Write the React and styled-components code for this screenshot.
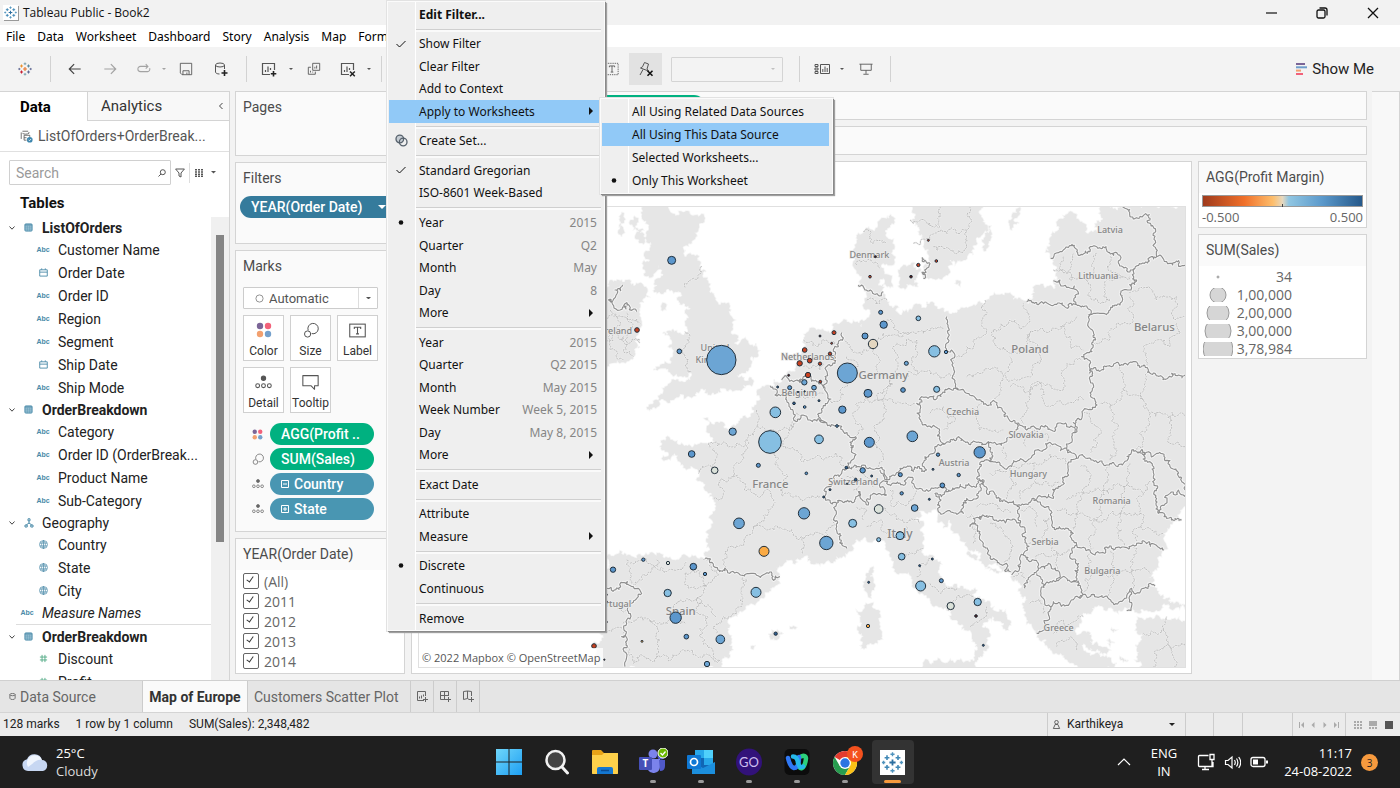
import React, { useState } from 'react';
import styled, { createGlobalStyle } from 'styled-components';

const GlobalStyle = createGlobalStyle`
	* {
		box-sizing: border-box;
	}

	body {
		margin: 0;
		font-family: Roboto, 'Liberation Sans', sans-serif;
		font-size: 14px;
		color: #333333;
	}

	button,
	input,
	select {
		font: inherit;
		color: inherit;
		margin: 0;
		padding: 0;
		border: 0;
		background: none;
	}

	ul {
		list-style: none;
		margin: 0;
		padding: 0;
	}

	a {
		color: inherit;
		text-decoration: none;
	}

	svg {
		display: block;
		flex: none;
	}
`;

const systemFont = "'Open Sans', 'Noto Sans', sans-serif";
const menuFont = "'Noto Sans', 'Open Sans', sans-serif";

const App = styled.div`
	display: flex;
	flex-direction: column;
	height: 100vh;
	overflow: hidden;
	background-color: #f3f3f3;
`;

/* ---------- window frame ---------- */

const TitleBar = styled.header`
	display: flex;
	align-items: center;
	height: 25px;
	padding: 0 2px 0 3px;
	gap: 5px;
	background-color: #f2f2f2;
	font-family: ${systemFont};
	font-size: 12px;
	color: #111111;
`;

const LogoTile = styled.span`
	display: grid;
	place-items: center;
	width: 15px;
	height: 15px;
	background-color: #ffffff;
	box-shadow: 1px 1px 0 #999999;
`;

const WindowButtons = styled.div`
	display: flex;
	margin-left: auto;
`;

const WindowButton = styled.button`
	display: grid;
	place-items: center;
	width: 51px;
	height: 25px;
`;

const MenuBar = styled.nav`
	display: flex;
	align-items: center;
	gap: 12px;
	height: 22px;
	padding-left: 6px;
	background-color: #ffffff;
	font-family: ${menuFont};
	font-size: 12px;
	color: #000000;
`;

const Toolbar = styled.div`
	display: flex;
	align-items: center;
	height: 44px;
	padding-left: 4px;
	color: #555555;
`;

const ToolButton = styled.button`
	display: grid;
	place-items: center;
	width: ${({ $width }) => $width || 35}px;
	height: 32px;
	background-color: ${({ $active }) => ($active ? '#e2e2e2' : 'transparent')};
	opacity: ${({ $faded }) => ($faded ? 0.5 : 1)};
`;

const ToolSeparator = styled.span`
	width: 1px;
	height: 26px;
	margin: 0 6px 0 ${({ $gap }) => $gap || 8}px;
	background-color: #d2d2d2;
`;

const ToolGroup = styled.div`
	display: flex;
	align-items: center;
	padding-left: ${({ $indent }) => $indent || 0}px;
`;

const FitBox = styled.label`
	display: flex;
	align-items: center;
	width: 112px;
	height: 25px;
	margin: 0 8px 0 9px;
	padding-right: 7px;
	border: 1px solid #d4d4d4;
	border-radius: 1px;
	color: #c0c0c0;
`;

const PlainSelect = styled.select`
	flex: 1;
	min-width: 0;
	appearance: none;
	outline: none;
`;

const ShowMe = styled.button`
	display: flex;
	align-items: center;
	gap: 5px;
	margin-left: auto;
	padding-right: 26px;
	font-size: 15px;
	color: #222222;
`;

/* ---------- workspace ---------- */

const Workspace = styled.main`
	display: flex;
	flex: 1;
	min-height: 0;
`;

const DataPane = styled.aside`
	display: flex;
	flex-direction: column;
	width: 230px;
	margin-right: 5px;
	background-color: #ffffff;
	border-right: 1px solid #d4d4d4;
	border-top: 1px solid #d4d4d4;
`;

const PaneTabs = styled.div`
	display: flex;
	height: 29px;
`;

const PaneTab = styled.button`
	display: flex;
	align-items: center;
	justify-content: space-between;
	flex: ${({ $active }) => ($active ? '0 0 87px' : 1)};
	padding: 0 4px 0 ${({ $active }) => ($active ? 20 : 13)}px;
	font-size: 15px;
	font-weight: ${({ $active }) => ($active ? 700 : 400)};
	color: ${({ $active }) => ($active ? '#000000' : '#333333')};
	background-color: ${({ $active }) => ($active ? '#ffffff' : '#f8f8f8')};
	border: solid #d4d4d4;
	border-width: ${({ $active }) => ($active ? 0 : '0 0 1px 1px')};
`;

const DataSource = styled.div`
	display: flex;
	align-items: center;
	gap: 5px;
	height: 31px;
	padding-left: 20px;
	border-bottom: 1px solid #e0e0e0;
	color: #555555;
`;

const SearchRow = styled.div`
	display: flex;
	align-items: center;
	gap: 4px;
	padding: 8px 12px 0 9px;
	color: #555555;
`;

const SearchBox = styled.label`
	display: flex;
	align-items: center;
	width: 162px;
	height: 25px;
	padding: 0 4px 0 6px;
	border: 1px solid #d0d0d0;
	border-radius: 1px;

	input {
		flex: 1;
		min-width: 0;
		outline: none;
	}

	input::placeholder {
		color: #9a9a9a;
	}
`;

const SmallDivider = styled.span`
	width: 1px;
	height: 20px;
	background-color: #dddddd;
`;

const ListTools = styled.button`
	display: flex;
	align-items: center;
	gap: 7px;
`;

const TablesTitle = styled.h2`
	margin: 0;
	padding: 8px 0 0 20px;
	height: 32px;
	font-size: 15px;
	line-height: 20px;
	font-weight: 700;
	color: #111111;
`;

const TreeArea = styled.div`
	display: flex;
	flex: 1;
	min-height: 0;
`;

const Tree = styled.ul`
	flex: 1;
	min-width: 0;
	overflow: hidden;
	color: #222222;
`;

const TreeGroup = styled.li`
	display: grid;
	grid-template-columns: 10px 12px 1fr;
	align-items: center;
	gap: 6px;
	height: 21px;
	padding-left: 8px;
	font-weight: ${({ $plain }) => ($plain ? 400 : 700)};
`;

const TreeItem = styled.li`
	display: grid;
	grid-template-columns: 20px 1fr;
	align-items: center;
	justify-items: start;
	gap: 5px;
	height: ${({ $top }) => ($top ? 21 : 23)}px;
	padding-left: ${({ $top }) => ($top ? 17 : 33)}px;
	font-style: ${({ $top }) => ($top ? 'italic' : 'normal')};
	white-space: nowrap;

	> :first-child {
		justify-self: center;
	}
`;

const TreeDivider = styled.li`
	height: 1px;
	margin: 1px 0 1px 16px;
	background-color: #dddddd;
`;

const AbcMark = styled.span`
	font-family: 'Liberation Sans', sans-serif;
	font-size: 7px;
	font-weight: 700;
	font-style: normal;
	color: #4a8aa8;
`;

const ScrollTrack = styled.div`
	width: 18px;
	padding: 18px 5px 0;
	background-color: #f0f0f0;
`;

const ScrollThumb = styled.div`
	height: 69%;
	background-color: #858585;
`;

/* ---------- cards ---------- */

const CardColumn = styled.section`
	display: flex;
	flex-direction: column;
	gap: 6px;
	width: ${({ $width }) => $width}px;
	margin-bottom: ${({ $bottom }) => $bottom || 0}px;
`;

const Card = styled.div`
	min-height: ${({ $height }) => $height || 0}px;
	flex: ${({ $grow }) => ($grow ? 1 : 'none')};
	border: 1px solid #d4d4d4;
	background-color: ${({ $white }) => ($white ? '#ffffff' : '#fafafa')};
`;

const CardTitle = styled.h3`
	margin: 0;
	padding-left: 7px;
	height: 31px;
	font-size: 14px;
	font-weight: 400;
	line-height: 31px;
	color: #4c4c4c;
	background-color: #fafafa;
`;

const Pill = styled.button`
	display: flex;
	align-items: center;
	gap: 5px;
	flex: 1;
	height: 22px;
	padding: 0 14px 0 11px;
	border-radius: 11px;
	font-size: 14px;
	font-weight: 500;
	line-height: 22px;
	white-space: nowrap;
	color: #ffffff;
	background-color: ${({ $kind }) => ({ measure: '#00b180', filter: '#357b9c', dimension: '#4996b2' }[$kind])};
`;

const FilterShelf = styled.div`
	display: flex;
	padding: 2px 4px;
`;

const PillCaret = styled.span`
	margin-left: auto;
`;

const MarkType = styled.label`
	display: flex;
	align-items: center;
	height: 22px;
	margin: 5px 26px 6px 7px;
	padding-left: 11px;
	gap: 5px;
	border: 1px solid #cccccc;
	border-radius: 1px;
	background-color: #ffffff;
	font-size: 13px;
	color: #555555;
`;

const MarkCaret = styled.span`
	display: grid;
	place-items: center;
	width: 19px;
	height: 20px;
	border-left: 1px solid #dddddd;
`;

const MarkButtons = styled.div`
	display: grid;
	grid-template-columns: repeat(3, 41px);
	gap: 6px;
	padding-left: 7px;
`;

const MarkButton = styled.button`
	display: flex;
	flex-direction: column;
	align-items: center;
	justify-content: space-between;
	height: 46px;
	padding: 6px 0 1px;
	border: 1px solid #d0d0d0;
	background-color: #ffffff;
	font-size: 12px;
	line-height: 16px;
	color: #333333;

	svg {
		color: #555555;
	}
`;

const MarkPills = styled.div`
	display: flex;
	flex-direction: column;
	gap: 3px;
	padding: 10px 30px 0 16px;
`;

const MarkPillRow = styled.div`
	display: grid;
	grid-template-columns: 12px 1fr;
	align-items: center;
	gap: 6px;
	color: #666666;
`;

const CheckList = styled.div`
	padding: 1px 7px;
	background-color: #ffffff;
`;

const CheckRow = styled.label`
	display: flex;
	align-items: center;
	gap: 5px;
	height: 20px;
	font-family: ${systemFont};
	font-size: 14px;
	color: #666666;
`;

const CheckBox = styled.input.attrs({ type: 'checkbox' })`
	appearance: none;
	width: 16px;
	height: 16px;
	border: 1px solid #666666;
	border-radius: 2px;
	background-color: #ffffff;

	&:checked::before {
		content: '';
		display: block;
		width: 3px;
		height: 6px;
		margin: 1px 0 0 4px;
		border: solid #333333;
		border-width: 0 1px 1px 0;
		transform: rotate(35deg);
	}
`;

/* ---------- view ---------- */

const ViewArea = styled.section`
	display: flex;
	flex-direction: column;
	flex: 1;
	gap: 6px;
	min-width: 0;
	margin: 0 5px 6px 6px;
`;

const Shelf = styled.div`
	display: flex;
	height: 29px;
	padding: 3px 4px 0 93px;
	border: 1px solid #d4d4d4;
	background-color: #fafafa;
`;

const ShelfPill = styled.span`
	width: 200px;
	height: 22px;
	border-radius: 11px;
	background-color: #00b180;
`;

const ViewRow = styled.div`
	display: flex;
	flex: 1;
	gap: 6px;
	min-height: 0;
`;

const Sheet = styled.div`
	display: flex;
	flex-direction: column;
	flex: 1;
	min-width: 0;
	padding: 44px 5px 5px 6px;
	border: 1px solid #d4d4d4;
	background-color: #ffffff;
`;

const MapFrame = styled.div`
	position: relative;
	flex: 1;
	min-height: 0;
	border: 1px solid #e0e0e0;
	overflow: hidden;

	svg {
		width: 100%;
		height: 100%;
	}
`;

const MapCredit = styled.div`
	position: absolute;
	left: 0;
	bottom: 0;
	padding: 0 3px;
	background-color: rgba(255, 255, 255, 0.8);
	font-family: ${systemFont};
	font-size: 11px;
	line-height: 19px;
	color: #555555;
`;

const ColorBar = styled.div`
	height: 12px;
	margin: 2px 3px 0;
	border: 1px solid #999999;
	background-image: linear-gradient(
		90deg,
		#9f3a1c 0%,
		#f0702a 26%,
		#fdbe6c 44%,
		#e6d8bf 50%,
		#90c6e2 54%,
		#5b99cb 75%,
		#26598b 100%
	);

	&::after {
		content: '';
		display: block;
		width: 1px;
		height: 3px;
		margin: 8px auto 0;
		background-color: #444444;
	}
`;

const ColorRange = styled.div`
	display: flex;
	justify-content: space-between;
	padding: 0 3px;
	font-family: ${systemFont};
	font-size: 13px;
	line-height: 20px;
	color: #666666;
`;

const LegendBody = styled.div`
	padding: 1px 0;
	background-color: #ffffff;
`;

const SizeRow = styled.div`
	display: grid;
	grid-template-columns: 30px 57px;
	align-items: center;
	gap: 2px;
	height: 18px;
	padding-left: 4px;
	font-family: ${systemFont};
	font-size: 14px;
	text-align: right;
	color: #666666;
`;

const SideStrip = styled.div`
	width: 28px;
	border: solid #d4d4d4;
	border-width: 1px 1px 0 0;
	background-color: #f8f8f8;
`;

/* ---------- context menus ---------- */

const Menu = styled.ul`
	position: absolute;
	z-index: 2;
	left: ${({ $left }) => $left}px;
	top: ${({ $top }) => $top}px;
	display: flex;
	flex-direction: column;
	width: ${({ $width }) => $width}px;
	height: ${({ $tall }) => ($tall ? '80vh' : 'auto')};
	padding: 1px 3px 1px 1px;
	background: linear-gradient(90deg, #efefef 27px, #ffffff 27px, #ffffff 28px, #efefef 28px);
	border: 1px solid #fbfbfb;
	box-shadow: 1px 1px 0 #8a8a8a, 2px 2px 1px #a0a0a0, 0 0 0 1px #e2e2e2;
	font-family: ${menuFont};
	font-size: 12px;
	color: #111111;
`;

const MenuRow = styled.li`
	flex: 1 1 0;
	display: flex;
	min-height: ${({ $short }) => ($short ? 23 : 0)}px;
`;

const MenuItem = styled.button`
	display: grid;
	grid-template-columns: 30px 1fr auto;
	align-items: center;
	flex: 1;
	padding-right: 4px;
	text-align: left;
	font-weight: ${({ $bold }) => ($bold ? 700 : 400)};
	background-color: ${({ $lit }) => ($lit ? '#91c9f7' : 'transparent')};

	> :first-child {
		margin-left: 6px;
	}
`;

const MenuHint = styled.span`
	color: #858585;
`;

const MenuArrow = styled.span`
	width: 0;
	margin-right: 4px;
	border: solid transparent;
	border-width: 4px 0 4px 4px;
	border-left-color: #111111;
`;

const MenuLine = styled.li`
	height: 7px;
	margin-left: 27px;
	padding-top: 3px;

	&::before {
		content: '';
		display: block;
		height: 2px;
		border-top: 1px solid #cfcfcf;
		background-color: #fafafa;
	}
`;

/* ---------- bottom bars ---------- */

const SheetTabs = styled.nav`
	display: flex;
	height: 32px;
	border-top: 1px solid #d0d0d0;
	background-color: #e5e5e5;
`;

const SheetTab = styled.button`
	display: flex;
	align-items: center;
	justify-content: ${({ $indent }) => ($indent ? 'flex-start' : 'center')};
	gap: 4px;
	width: ${({ $width }) => $width}px;
	padding-left: ${({ $indent }) => $indent || 0}px;
	border-right: 1px solid #cccccc;
	font-weight: ${({ $active }) => ($active ? 700 : 400)};
	color: ${({ $active }) => ($active ? '#333333' : '#666666')};
	background-color: ${({ $active }) => ($active ? '#fafafa' : 'transparent')};
`;

const StatusBar = styled.footer`
	display: flex;
	align-items: stretch;
	height: 24px;
	padding-left: 3px;
	border-top: 1px solid #d4d4d4;
	background-color: #ebebeb;
	font-size: 12px;
	line-height: 23px;
	color: #222222;

	> span {
		margin-right: 16px;
	}
`;

const StatusCells = styled.div`
	display: flex;
	margin-left: auto;
`;

const StatusCell = styled.div`
	display: flex;
	align-items: center;
	justify-content: space-evenly;
	width: ${({ $width }) => $width}px;
	border-left: 1px solid #cccccc;
	color: ${({ $faded }) => ($faded ? '#aaaaaa' : '#555555')};
`;

const UserButton = styled.button`
	display: flex;
	align-items: center;
	flex: 1;
	gap: 6px;
	padding: 0 10px 0 4px;
	color: #222222;
	font-size: 12px;

	svg:last-child {
		margin-left: auto;
	}
`;

const Taskbar = styled.footer`
	display: grid;
	grid-template-columns: 1fr auto 1fr;
	align-items: center;
	height: 52px;
	background-color: #1f1f1f;
	font-family: ${systemFont};
	font-size: 13px;
	line-height: 18px;
	color: #ffffff;
`;

const Weather = styled.div`
	display: flex;
	align-items: center;
	gap: 7px;
	padding-left: 21px;

	div + div {
		color: #dddddd;
	}
`;

const TaskIcons = styled.div`
	display: flex;
	padding-left: 1px;
`;

const TaskButton = styled.button`
	position: relative;
	display: grid;
	place-items: center;
	width: 42px;
	height: 44px;
	margin: 0 3px;
	border-radius: 4px;
	background-color: ${({ $active }) => ($active ? '#333333' : 'transparent')};

	&::after {
		content: '';
		position: absolute;
		bottom: 1px;
		width: ${({ $active }) => ($active ? 17 : 6)}px;
		height: 3px;
		border-radius: 2px;
		background-color: ${({ $active, $running }) => ($active ? '#f79a3e' : $running ? '#9a9a9a' : 'transparent')};
	}
`;

const Tray = styled.div`
	display: flex;
	align-items: center;
	justify-content: flex-end;
	gap: 9px;
	padding-right: 22px;
`;

const TrayText = styled.div`
	padding: ${({ $right }) => ($right ? '0 11px 0 7px' : '0 11px')};
	text-align: ${({ $right }) => ($right ? 'right' : 'center')};
`;

const Notice = styled.span`
	display: grid;
	place-items: center;
	width: 17px;
	height: 17px;
	margin-left: -11px;
	border-radius: 50%;
	font-size: 10px;
	color: #222222;
	background-color: #f79a3e;
`;

/* ---------- icons ---------- */

const Icon = ({ size = 16, box = 16, width = 1, children }) => (
	<svg
		width={size}
		height={size}
		viewBox={`0 0 ${box} ${box}`}
		fill='none'
		stroke='currentColor'
		strokeWidth={width}
		aria-hidden='true'
	>
		{children}
	</svg>
);

const Caret = ({ size = 6 }) => (
	<svg width={size} height={size / 2} viewBox='0 0 8 4' aria-hidden='true'>
		<path d='M0 0h8L4 4z' fill='currentColor' />
	</svg>
);

const plus = (x, y, s) => `M${x - s} ${y}h${s * 2}M${x} ${y - s}v${s * 2}`;

const TableauLogo = ({ size = 14, colorful }) => {
	const c = colorful
		? ['#e8762c', '#eb912c', '#c72035', '#5c6692', '#59879b', '#7199a6', '#5b6591']
		: ['#2d6fa0', '#3f87b5', '#3f87b5', '#3f87b5', '#3f87b5', '#4f93bd', '#4f93bd'];
	return (
		<svg width={size} height={size} viewBox='0 0 32 32' fill='none' aria-hidden='true'>
			<path d={plus(16, 16, 4.5)} stroke={c[0]} strokeWidth='2.6' />
			<path d={plus(8, 9, 3.5)} stroke={c[1]} strokeWidth='2.3' />
			<path d={plus(24, 9, 3.5)} stroke={c[4]} strokeWidth='2.3' />
			<path d={plus(8, 23, 3.5)} stroke={c[2]} strokeWidth='2.3' />
			<path d={plus(24, 23, 3.5)} stroke={c[3]} strokeWidth='2.3' />
			<path d={`${plus(16, 4, 3)}${plus(16, 28, 3)}`} stroke={c[5]} strokeWidth='2' />
			<path d={`${plus(3, 16, 2.5)}${plus(29, 16, 2.5)}`} stroke={c[6]} strokeWidth='2' />
		</svg>
	);
};

const ColorDots = ({ size = 16 }) => (
	<svg width={size} height={size} viewBox='0 0 16 16' aria-hidden='true'>
		<circle cx='4' cy='4' r='3.2' fill='#7b6597' />
		<circle cx='12' cy='4' r='3.2' fill='#f2617a' />
		<circle cx='4' cy='12' r='3.2' fill='#f2a06f' />
		<circle cx='12' cy='12' r='3.2' fill='#74a0cc' />
	</svg>
);

const SizeIcon = ({ size = 16 }) => (
	<Icon size={size}>
		<path d='M5.2 8.4A5.2 5.2 0 1 1 8.7 11.6' />
		<circle cx='4.6' cy='12' r='3.1' />
	</Icon>
);

const DetailIcon = ({ size = 17 }) => (
	<Icon size={size}>
		<circle cx='8' cy='4' r='2' fill='currentColor' />
		<circle cx='2.5' cy='11' r='1.8' />
		<circle cx='8' cy='11' r='1.8' />
		<circle cx='13.5' cy='11' r='1.8' />
	</Icon>
);

const LabelIcon = ({ size = 17 }) => (
	<Icon size={size}>
		<rect x='.7' y='2' width='14.6' height='12' />
		<path d='M5 6.5V5h6v1.5M8 5v6.2M6.6 11.2h2.8' />
	</Icon>
);

const TooltipIcon = () => (
	<Icon size={17}>
		<path d='M.8 1.5h14.4v9.5h-3.4v3.4L8.4 11H.8z' strokeLinejoin='round' />
	</Icon>
);

const CalendarIcon = () => (
	<Icon size={9} box={10}>
		<path d='M.8 2h8.4v7H.8zM.8 4.6h8.4M3 .4V2M7 .4V2' stroke='#4a8aa8' />
	</Icon>
);

const GlobeIcon = () => (
	<Icon size={9} box={10}>
		<path
			d='M5 .6a4.4 4.4 0 1 0 0 8.8A4.4 4.4 0 0 0 5 .6zM5 .6v8.8M1 3.4h8M1 6.6h8M5 .6c-2.8 2.6-2.8 6.2 0 8.8 2.8-2.6 2.8-6.2 0-8.8'
			stroke='#4a8aa8'
			strokeWidth='.8'
		/>
	</Icon>
);

const HashIcon = () => (
	<Icon size={9} box={10}>
		<path d='M3.4 1v8M6.6 1v8M1 3.4h8M1 6.6h8' stroke='#4fa983' />
	</Icon>
);

const TableIcon = () => (
	<Icon size={9} box={10}>
		<rect x='1' y='1' width='8' height='8' rx='1' fill='#9cc3d6' stroke='#4a8aa8' />
		<path d='M1 2.2h8' stroke='#4a8aa8' />
		<path d='M1 4.6h8M1 6.8h8M3.7 3v6M6.3 3v6' stroke='#4a8aa8' strokeWidth='.4' />
	</Icon>
);

const HierarchyIcon = () => (
	<Icon size={10} box={10}>
		<path d='M5 3v2M5 5L2.2 7M5 5l2.8 2M4 .8h2v2H4zM1 7h2.2v2H1zM6.8 7H9v2H6.8z' stroke='#4a8aa8' />
	</Icon>
);

const ChevronIcon = ({ left }) => (
	<Icon size={8} box={8}>
		<path d={left ? 'M5.5 1L2.5 4l3 3' : 'M1.5 2.5L4 5.2l2.5-2.7'} stroke='#444444' />
	</Icon>
);

const SheetPlusIcon = ({ kind }) => (
	<Icon size={13} box={13}>
		{kind === 'sheet' && <path d='M8 10.5H1.5v-9h8V6M3.5 8.5v-2M5.5 8.5v-3M7.5 6.5v-2' />}
		{kind === 'dashboard' && <path d='M7 9.5H1.5v-8h8V6M1.5 5.5h8M5.5 1.5v8' />}
		{kind === 'story' && <path d='M7 9.5l-1.5-1-4 1v-8l4-.5 4 .5V6M5.5 1v7.5' />}
		<path d='M9.5 7v5M7 9.5h5' />
	</Icon>
);

/* ---------- map drawing ---------- */

// fractal midpoint displacement, so that borders look like rivers and coasts
const makeRandom = seed => () => {
	seed = (seed * 16807) % 2147483647;
	return seed / 2147483647 - 0.5;
};

const rough = (line, amount, closed = false) => {
	const points = line.split(' ').map(p => p.split(',').map(Number));
	const random = makeRandom(Math.abs(points[0][0] * 31 + points[0][1] * 17) + 7);
	if (closed) points.push(points[0]);
	const out = [points[0]];
	const split = (a, b) => {
		const dx = b[0] - a[0];
		const dy = b[1] - a[1];
		const length = Math.hypot(dx, dy);
		if (length < 7) {
			out.push(b);
			return;
		}
		const k = random() * amount * Math.min(1, 30 / length);
		const mid = [(a[0] + b[0]) / 2 - dy * k, (a[1] + b[1]) / 2 + dx * k];
		split(a, mid);
		split(mid, b);
	};
	points.slice(1).forEach((p, i) => split(points[i], p));
	return `M${out.map(p => p.map(Math.round).join(' ')).join('L')}${closed ? 'Z' : ''}`;
};

const land = [
	// Great Britain, Ireland and islands
	'165,10 245,10 245,40 262,46 335,42 343,60 325,90 305,130 275,160 305,165 332,190 348,215 355,245 358,275 400,310 420,345 428,380 412,375 440,405 432,430 470,420 498,430 503,460 485,490 455,518 440,525 490,540 485,558 440,570 380,580 330,572 300,590 270,582 240,608 205,602 185,628 172,628 195,600 225,560 270,545 305,528 295,515 270,528 235,515 190,510 225,485 250,465 235,440 245,420 218,400 260,392 290,400 290,360 302,325 285,318 262,300 275,265 245,270 215,282 195,268 210,235 212,208 205,195 185,232 165,228 180,180 165,172 182,140 170,120 176,80 160,60',
	'40,262 95,240 155,250 176,290 148,325 155,370 150,440 120,480 50,505 -110,500 -120,300',
	'215,325 225,310 228,320 218,332',
	'125,60 145,55 140,75 160,90 150,100 130,80',
	'135,110 160,100 165,125 145,118',
	'92,45 102,40 92,70 95,110 88,80',
	// mainland
	'500,575 540,557 575,540 605,515 630,478 642,430 650,398 685,388 730,385 750,370 790,362 815,382 838,352 820,320 832,290 808,258 800,220 795,180 800,130 805,100 840,88 868,62 902,44 905,70 885,95 910,118 903,160 912,180 880,190 868,240 882,262 885,300 925,322 930,345 970,320 1010,305 1035,318 1055,345 1085,342 1140,320 1190,300 1260,278 1270,300 1310,310 1335,296 1332,268 1390,266 1388,190 1380,170 1383,110 1400,70 1450,40 1475,65 1490,100 1528,96 1530,30 1535,5 1800,5 1800,915 1760,945 1740,980 1722,1010 1722,1050 1695,1075 1700,1110 1675,1130 1690,1145 1700,1170 1740,1198 1800,1215 1800,1228 1740,1218 1700,1230 1650,1240 1620,1215 1570,1232 1530,1218 1480,1238 1475,1262 1452,1280 1498,1305 1510,1350 1475,1320 1480,1350 1530,1372 1580,1410 1470,1410 1400,1360 1370,1320 1340,1300 1310,1255 1315,1200 1290,1150 1235,1115 1175,1090 1150,1055 1105,1000 1080,960 1060,985 1045,940 1025,930 985,935 975,960 995,1010 1000,1045 1030,1075 1058,1145 1105,1165 1155,1165 1145,1185 1200,1220 1250,1250 1262,1275 1255,1290 1220,1262 1170,1272 1200,1310 1195,1345 1160,1385 1150,1410 1135,1410 1155,1340 1140,1290 1105,1265 1075,1232 1020,1200 980,1165 935,1120 900,1070 888,1030 860,1018 825,1010 785,1035 765,1060 720,1085 690,1095 655,1068 600,1080 568,1095 565,1130 570,1150 520,1195 450,1232 412,1285 430,1350 395,1380 385,1410 20,1410 10,1330 45,1290 30,1150 45,1065 90,1052 120,1065 200,1067 270,1075 340,1080 360,1050 370,970 372,900 335,845 325,815 270,785 215,775 232,755 210,740 250,722 320,735 355,738 360,700 342,655 375,668 400,680 450,662 485,640 500,610',
	// Scandinavia
	'955,5 965,60 985,95 1000,140 1018,170 1000,200 1000,232 1065,228 1078,180 1150,165 1180,100 1190,5',
	'925,215 950,200 975,190 990,205 978,235 985,260 945,268 928,250',
	'870,225 905,235 900,265 875,260',
	'1180,150 1195,80 1202,78 1188,152',
	'1258,75 1265,50 1290,22 1290,40 1265,90',
	'1098,242 1112,248 1110,258 1096,250',
	// Mediterranean
	'830,1130 850,1100 855,1160 845,1195 825,1165',
	'800,1232 850,1208 868,1240 862,1330 815,1345 802,1290',
	'535,1302 562,1290 578,1300 560,1320',
	'483,1345 497,1335 490,1348',
	'600,1280 620,1282 615,1287',
	'1000,1395 1060,1388 1150,1385 1140,1410 1000,1410',
	'1085,975 1100,990 1095,1000 1082,985',
	'1130,1060 1160,1075 1155,1080',
	'1190,1105 1230,1115 1225,1120',
	// Aegean
	'1640,1262 1700,1245 1800,1250 1800,1410 1650,1410 1640,1350 1655,1300',
	'1550,1320 1575,1328 1560,1338',
	'1480,1300 1560,1350 1550,1362 1470,1330',
	'1565,1285 1580,1290 1570,1298',
	'1590,1370 1615,1380 1600,1385'
];

const borders = [
	'98,255 75,270 55,300 90,330 110,308 140,335',
	'805,255 825,270 880,275',
	'997,172 1010,205 1000,235',
	'755,398 745,440 735,465 735,490 705,505 710,550 700,565',
	'575,540 610,545 640,530 680,545 700,560',
	'540,557 555,585 590,600 610,635 660,660 710,668',
	'700,560 712,610 690,640 710,668',
	'710,668 760,695 797,710 785,750 770,805',
	'770,805 735,825 720,860 700,892 740,910 730,960 750,1000 770,1045',
	'740,910 790,908 805,875 835,915 850,880 890,885 870,850',
	'770,805 820,795 860,805 890,840',
	'870,810 890,840 930,805 970,815 1010,810 1005,770 1040,740 1065,732',
	'870,850 915,850 970,838 990,865 1070,875 1125,865 1170,840',
	'1170,840 1170,800 1200,785 1200,750 1195,725',
	'1065,732 1105,710 1155,725 1195,725 1250,715 1280,670',
	'1065,732 1050,720 990,650 980,610 1020,590 1075,565 1105,570',
	'1105,570 1092,520 1085,450 1070,430 1078,390 1070,350',
	'1105,570 1165,600 1190,615 1215,605 1240,635 1280,670',
	'1280,670 1310,690 1360,680 1400,675 1455,698',
	'1455,698 1460,660 1515,600 1500,540 1498,500 1475,470 1510,435 1500,345 1455,313',
	'1310,305 1400,313 1455,313 1460,270 1420,258 1390,242',
	'1495,345 1540,340 1590,315 1600,270 1640,240 1635,205',
	'1382,175 1420,150 1500,155 1550,150 1590,180 1635,205',
	'1635,205 1700,170 1690,100 1680,55 1620,50 1590,15',
	'1700,170 1740,190 1790,195',
	'1498,520 1540,500 1600,495 1680,520 1790,525',
	'1200,785 1230,790 1280,785 1340,750 1400,735 1430,745 1445,710 1455,698',
	'1430,745 1460,775 1420,840 1390,895 1330,900',
	'1460,775 1560,790 1640,755 1690,830 1705,940',
	'1640,755 1700,760 1740,800 1790,880 1740,880 1705,940 1730,955 1775,960',
	'1170,840 1190,880 1230,905 1280,915 1330,895',
	'1170,840 1165,880 1130,895 1120,940 1045,935 1035,880 1070,875',
	'1280,915 1290,970 1230,960 1150,955 1140,980 1180,1040 1262,1115',
	'1290,970 1310,1030 1300,1065 1265,1125',
	'1330,895 1370,920 1385,950 1400,985 1450,1000 1460,1035',
	'1460,1035 1500,1050 1570,1050 1640,1030 1722,1050',
	'1460,1035 1445,1050 1465,1100 1445,1145',
	'1465,1142 1400,1142 1365,1155 1360,1195 1385,1220 1465,1192 1465,1142',
	'1300,1065 1345,1105 1375,1090 1410,1125 1400,1142',
	'1345,1105 1320,1130 1305,1165',
	'1340,1120 1365,1155',
	'1465,1192 1530,1190 1600,1200 1625,1165 1695,1158',
	'1610,1232 1625,1165',
	'1385,1220 1370,1280 1340,1300',
	'345,1075 370,1092 440,1117 490,1120 570,1130',
	'50,1165 130,1160 145,1190 115,1210 110,1270 95,1310 105,1400'
];

const regions = [
	'335,198 310,235 285,262',
	'285,395 295,430 285,465 305,515',
	'60,330 80,380 60,430 100,480',
	'50,370 100,350 150,370',
	'50,420 100,410 150,430',
	'110,340 120,400 100,450 130,470',
	'500,630 500,680 560,700 600,690 620,640',
	'620,640 600,690 580,740 630,780 700,780',
	'360,742 430,740 470,720 500,680',
	'370,745 375,790 325,820',
	'470,720 460,770 430,830 390,840 400,880 372,895',
	'430,830 490,880 540,880 535,940 490,980',
	'555,790 580,840 570,870 600,885 690,890',
	'560,790 555,740 580,740',
	'490,980 460,1020 420,1040 415,1110',
	'490,980 530,990 575,985 610,1000 640,1015 640,1060',
	'640,1015 690,1000 740,950',
	'700,780 750,770 770,805',
	'110,1080 120,1160 200,1080',
	'120,1090 180,1090 250,1110 290,1085',
	'285,1120 340,1130 350,1160 290,1155 285,1120',
	'340,1080 380,1110 340,1180 330,1210 380,1250',
	'460,1120 450,1200 440,1240 400,1250 380,1300',
	'100,1270 180,1260 260,1270 285,1270',
	'255,1230 270,1200 330,1210 310,1240 350,1270 330,1310 390,1380',
	'180,1260 210,1320 200,1370 130,1390 110,1340',
	'200,1370 330,1370 390,1380',
	'50,1210 110,1230',
	'40,1290 100,1300',
	'830,300 870,310 890,300',
	'770,470 800,500 780,540 750,600 710,610',
	'750,420 800,460 850,450 860,510 900,540 870,600 800,610',
	'800,610 790,650 820,690 790,710',
	'870,600 880,650 860,700 880,780 870,810',
	'850,450 880,400 940,410 960,400',
	'890,360 920,390 1000,400 1060,385',
	'920,430 980,420 985,520 940,530 915,520 915,480 920,430',
	'985,520 1050,535 1095,530',
	'875,600 940,610 980,610',
	'915,520 890,580 875,600',
	'640,420 680,440 710,420 740,440',
	'640,500 690,510 700,490',
	'590,580 640,590 700,580',
	'770,830 800,840 790,870',
	'800,810 830,830 850,860',
	'870,930 920,960 990,970',
	'820,960 830,930 800,920',
	'830,980 870,960 890,1000 950,980',
	'900,870 910,920 960,900 970,850',
	'940,1070 980,1050 1000,1045',
	'980,1130 1000,1090 1030,1075',
	'1020,1150 1050,1180 1100,1165',
	'1075,1232 1100,1190 1150,1190',
	'1140,1280 1170,1260 1190,1220',
	'1085,500 1130,440 1190,400 1185,300',
	'1210,390 1260,360 1310,375 1300,310',
	'1210,390 1220,440 1290,460 1320,400 1400,385 1460,350',
	'1320,400 1350,490 1290,540 1250,530 1260,470',
	'1130,530 1200,510 1240,530 1210,600',
	'1410,380 1440,440 1480,450',
	'1350,550 1420,570 1430,490 1475,480',
	'1350,550 1370,620 1430,610 1480,600',
	'1260,560 1300,560 1350,550 1310,620 1300,670',
	'1020,640 1060,620 1090,650 1060,690',
	'1090,650 1150,640 1180,610',
	'1150,640 1170,690 1240,690',
	'1390,210 1430,220 1450,160',
	'1420,170 1410,200 1440,240 1490,240 1520,160',
	'1490,240 1510,300 1560,300 1550,240 1620,230',
	'1560,170 1550,200 1600,230',
	'970,130 1020,120 1050,95 1130,90 1140,20',
	'1030,140 1080,150 1130,140 1130,90',
	'960,60 1050,80 1050,20',
	'800,195 850,190 870,205',
	'820,95 850,130 890,130',
	'1610,270 1680,265 1700,300 1760,290 1755,360 1785,350',
	'1510,430 1560,420 1580,370 1630,350 1620,290',
	'1680,520 1670,460 1700,420 1740,440 1760,370',
	'1590,500 1600,570 1560,620 1530,610',
	'1670,520 1660,600 1680,640 1790,660',
	'1680,640 1660,720 1640,750',
	'1600,570 1660,600',
	'1560,620 1580,690 1560,780',
	'1480,640 1520,680 1500,760',
	'1740,650 1740,730 1785,740',
	'1200,820 1260,800 1280,850 1240,900',
	'1260,800 1330,790 1340,850 1290,900',
	'1330,790 1400,770 1440,800',
	'1340,850 1410,850',
	'1380,740 1370,700 1320,700 1310,740',
	'1240,740 1250,780',
	'1340,980 1330,930 1290,930',
	'1310,1030 1370,1020 1400,1060 1440,1050',
	'1370,1020 1360,960 1390,950',
	'1340,1080 1400,1060 1410,1120',
	'1430,900 1480,880 1500,820 1470,800',
	'1480,880 1540,870 1560,800',
	'1540,870 1600,860 1620,790',
	'1600,860 1660,880 1690,850',
	'1400,930 1460,940 1480,880',
	'1460,940 1450,990',
	'1460,940 1520,960 1540,870',
	'1520,960 1510,1045',
	'1520,960 1590,940 1600,860',
	'1590,940 1600,1040',
	'1590,940 1650,940 1660,880',
	'1650,940 1640,1025',
	'1650,980 1720,1000',
	'1500,1060 1510,1110 1480,1180',
	'1560,1055 1570,1120 1550,1190',
	'1510,1110 1570,1120 1630,1110 1680,1120',
	'1630,1040 1630,1110 1610,1190',
	'1160,920 1210,910 1260,940',
	'1130,950 1160,1000 1150,1030',
	'1200,970 1240,1000 1270,1040 1240,1090',
	'1270,1130 1300,1120 1320,1150',
	'1320,1210 1350,1200 1360,1240',
	'1390,1300 1420,1260 1480,1250',
	'1400,1340 1440,1310 1460,1350',
	'1660,1300 1720,1290 1740,1340 1785,1330',
	'1720,1290 1730,1250',
	'1690,1400 1700,1350 1740,1340 1750,1400'
];

const labels = [
	['Latvia', 1560, 90, 27],
	['Lithuania', 1525, 227, 27],
	['Belarus', 1693, 381, 34],
	['Poland', 1320, 448, 34],
	['Denmark', 838, 164, 27],
	['United', 375, 443, 27],
	['Kingdom', 375, 479, 27],
	['Ireland', 80, 392, 27],
	['Netherlands', 653, 470, 27],
	['Belgium', 628, 579, 27],
	['Germany', 880, 526, 34],
	['Czechia', 1118, 637, 27],
	['Slovakia', 1308, 706, 27],
	['Austria', 1092, 788, 27],
	['Hungary', 1315, 821, 27],
	['Switzerland', 790, 847, 27],
	['France', 541, 853, 34],
	['Italy', 930, 1002, 36],
	['Romania', 1565, 903, 27],
	['Serbia', 1365, 1025, 27],
	['Bulgaria', 1537, 1112, 27],
	['Greece', 1406, 1283, 27],
	['Portugal', 68, 1213, 27],
	['Spain', 272, 1232, 34]
];

const tones = {
	b: '#5c97cd',
	m: '#6ca5d4',
	l: '#86bfe2',
	d: '#2f5f92',
	r: '#c9401f',
	k: '#5a1512',
	o: '#fbab45',
	t: '#e3d6c0',
	p: '#dbe2da'
};

const marks = [
	['b', 245, 181, 12], ['r', 141, 390, 7], ['b', 268, 454, 7], ['m', 394, 480, 44], ['m', 772, 519, 30],
	['k', 856, 170, 3], ['r', 840, 230, 4], ['b', 872, 337, 6], ['b', 881, 374, 11], ['b', 825, 408, 9],
	['t', 849, 432, 14], ['r', 732, 398, 6], ['k', 690, 408, 3], ['r', 725, 430, 3], ['r', 720, 461, 5],
	['r', 644, 450, 7], ['r', 629, 490, 8], ['r', 659, 482, 7], ['r', 690, 491, 5], ['k', 596, 526, 3],
	['r', 654, 525, 8], ['r', 691, 545, 4], ['m', 643, 547, 8], ['b', 599, 563, 6], ['d', 563, 561, 3],
	['m', 672, 563, 7], ['d', 644, 574, 2], ['d', 624, 576, 2], ['d', 612, 610, 4], ['d', 687, 602, 3],
	['b', 644, 621, 4], ['b', 741, 678, 4], ['b', 834, 580, 12], ['b', 757, 629, 11], ['l', 556, 637, 16],
	['m', 428, 695, 11], ['r', 1015, 121, 3], ['r', 1039, 183, 4], ['r', 985, 195, 5], ['k', 963, 230, 4],
	['l', 985, 355, 7], ['l', 1033, 454, 17], ['b', 1068, 456, 5], ['m', 949, 490, 6], ['b', 939, 570, 7],
	['l', 1040, 568, 9], ['m', 967, 709, 16], ['l', 540, 726, 34], ['l', 687, 718, 13],
	['b', 838, 727, 15], ['b', 305, 762, 10], ['p', 374, 811, 10], ['b', 505, 796, 6], ['b', 649, 820, 4],
	['d', 769, 803, 4], ['b', 818, 811, 8], ['d', 845, 828, 3], ['d', 797, 839, 4], ['d', 771, 851, 2],
	['d', 720, 869, 3], ['d', 701, 891, 3], ['p', 866, 927, 13], ['l', 788, 970, 12], ['m', 642, 940, 17],
	['m', 447, 970, 16], ['o', 522, 1054, 15], ['m', 709, 1029, 20], ['l', 866, 1019, 6], ['b', 69, 1109, 8],
	['b', 160, 1079, 5], ['p', 234, 1089, 5], ['b', 310, 1100, 10], ['b', 345, 1122, 5], ['l', 233, 1179, 11],
	['l', 498, 1177, 15], ['b', 257, 1253, 17], ['o', 156, 1324, 3], ['b', 289, 1310, 7], ['m', 391, 1318, 13],
	['m', 351, 1392, 8], ['d', 557, 1301, 5], ['d', 836, 1147, 3], ['o', 834, 1278, 5], ['r', 12, 1338, 7],
	['k', 49, 1184, 3], ['k', 49, 1205, 3], ['k', 49, 1266, 3], ['k', 43, 1379, 2], ['b', 1044, 764, 5],
	['b', 1169, 757, 17], ['d', 1029, 808, 3], ['b', 1106, 825, 5], ['b', 931, 824, 6], ['b', 1057, 856, 7],
	['b', 935, 880, 5], ['d', 1018, 898, 3], ['m', 974, 924, 10], ['l', 930, 1007, 12], ['l', 935, 1070, 10],
	['d', 1027, 1077, 3], ['d', 989, 1097, 3], ['b', 1054, 1142, 6], ['l', 992, 1158, 15], ['p', 1082, 1218, 11],
	['l', 1163, 1206, 11], ['k', 1158, 1248, 4], ['d', 1180, 1336, 3]
];

const landPath = land.map(line => rough(line, 0.9, true)).join('');
const borderPath = borders.map(line => rough(line, 0.9)).join('');
const regionPath = regions.map(line => rough(line, 0.9)).join('');

const EuropeMap = () => (
	<svg viewBox='-519 21 2304 1380' preserveAspectRatio='xMaxYMid slice' role='img' aria-label='Map of Europe'>
		<path d={landPath} fill='#e6e6e6' stroke='#f7f7f7' strokeWidth='5' />
		<path d={landPath} fill='#e6e6e6' />
		<g fill='none' strokeLinejoin='round'>
			<path d={regionPath} stroke='#f0f0f0' strokeWidth='5' />
			<path d={regionPath} stroke='#b4b4b4' strokeWidth='2.4' strokeDasharray='7 2' />
			<path d={borderPath} stroke='#f6f6f6' strokeWidth='9' />
			<path d={borderPath} stroke='#8f8f8f' strokeWidth='3.4' />
		</g>
		<g
			fill='#858585'
			stroke='#ebebeb'
			strokeWidth='5'
			paintOrder='stroke'
			textAnchor='middle'
			fontWeight='500'
			fontFamily="'Noto Sans', sans-serif"
		>
			{labels.map(([name, x, y, size]) => (
				<text key={name} x={x} y={y + size * 0.35} fontSize={size}>
					{name}
				</text>
			))}
		</g>
		<g stroke='#22303c' strokeWidth='3'>
			{marks.map(([tone, x, y, r]) => (
				<circle key={`${x}-${y}`} cx={x} cy={y} r={r} fill={tones[tone]} />
			))}
		</g>
	</svg>
);

/* ---------- data ---------- */

const tree = [
	{ group: 'ListOfOrders' },
	{ name: 'Customer Name', type: 'text' },
	{ name: 'Order Date', type: 'date' },
	{ name: 'Order ID', type: 'text' },
	{ name: 'Region', type: 'text' },
	{ name: 'Segment', type: 'text' },
	{ name: 'Ship Date', type: 'date' },
	{ name: 'Ship Mode', type: 'text' },
	{ group: 'OrderBreakdown' },
	{ name: 'Category', type: 'text' },
	{ name: 'Order ID (OrderBreak...', type: 'text' },
	{ name: 'Product Name', type: 'text' },
	{ name: 'Sub-Category', type: 'text' },
	{ group: 'Geography', plain: true },
	{ name: 'Country', type: 'geo' },
	{ name: 'State', type: 'geo' },
	{ name: 'City', type: 'geo' },
	{ name: 'Measure Names', type: 'text', top: true },
	{ divider: true },
	{ group: 'OrderBreakdown' },
	{ name: 'Discount', type: 'number' },
	{ name: 'Profit', type: 'number' }
];

const typeIcons = {
	text: <AbcMark>Abc</AbcMark>,
	date: <CalendarIcon />,
	geo: <GlobeIcon />,
	number: <HashIcon />
};

const menuItems = [
	{ name: 'Edit Filter...', bold: true },
	null,
	{ name: 'Show Filter', mark: 'check' },
	{ name: 'Clear Filter' },
	{ name: 'Add to Context' },
	{ name: 'Apply to Worksheets', more: true, lit: true },
	null,
	{ name: 'Create Set...', mark: 'set' },
	null,
	{ name: 'Standard Gregorian', mark: 'check' },
	{ name: 'ISO-8601 Week-Based' },
	null,
	{ name: 'Year', hint: '2015', mark: 'dot' },
	{ name: 'Quarter', hint: 'Q2' },
	{ name: 'Month', hint: 'May' },
	{ name: 'Day', hint: '8' },
	{ name: 'More', more: true },
	null,
	{ name: 'Year', hint: '2015' },
	{ name: 'Quarter', hint: 'Q2 2015' },
	{ name: 'Month', hint: 'May 2015' },
	{ name: 'Week Number', hint: 'Week 5, 2015' },
	{ name: 'Day', hint: 'May 8, 2015' },
	{ name: 'More', more: true },
	null,
	{ name: 'Exact Date' },
	null,
	{ name: 'Attribute' },
	{ name: 'Measure', more: true },
	null,
	{ name: 'Discrete', mark: 'dot' },
	{ name: 'Continuous' },
	null,
	{ name: 'Remove' }
];

const applyItems = [
	{ name: 'All Using Related Data Sources' },
	{ name: 'All Using This Data Source', lit: true },
	{ name: 'Selected Worksheets...' },
	{ name: 'Only This Worksheet', mark: 'dot' }
];

const menuMarks = {
	check: (
		<Icon size={12} box={12}>
			<path d='M1.5 6l3 3 6-6' />
		</Icon>
	),
	dot: (
		<Icon size={12} box={12}>
			<circle cx='6' cy='5.5' r='2.3' fill='currentColor' stroke='none' />
		</Icon>
	),
	set: (
		<Icon size={13} box={13} width={1.3}>
			<circle cx='4.8' cy='5' r='3.8' stroke='#55606b' fill='#c5ccd3' />
			<circle cx='8.2' cy='8' r='3.8' stroke='#55606b' />
		</Icon>
	)
};

const MenuEntries = ({ items, short }) =>
	items.map((item, index) =>
		item ? (
			<MenuRow key={index} $short={short}>
				<MenuItem $bold={item.bold} $lit={item.lit}>
					<span>{menuMarks[item.mark]}</span>
					{item.name}
					{item.more && <MenuArrow />}
					{item.hint && <MenuHint>{item.hint}</MenuHint>}
				</MenuItem>
			</MenuRow>
		) : (
			<MenuLine key={index} />
		)
	);

/* ---------- parts ---------- */

const ToolbarRow = () => (
	<Toolbar>
		<ToolButton $width={42} aria-label='Start page'>
			<TableauLogo colorful />
		</ToolButton>
		<ToolSeparator $gap={4} />
		<ToolButton aria-label='Undo'>
			<Icon size={14} width={1.4}><path d='M14.5 8H1.5M7 2.5L1.500 8 7 13.5' stroke='#444444' /></Icon>
		</ToolButton>
		<ToolButton $faded aria-label='Redo'>
			<Icon size={14} width={1.4}><path d='M1.500 8h13M9 2.5L14.500 8 9 13.5' /></Icon>
		</ToolButton>
		<ToolButton $width={33} $faded aria-label='Replay'>
			<Icon size={14} width={1.2}><path d='M12 5H4a3 3 0 0 0 0 6h8a3 3 0 0 0 2.500-4M10 2.500L12.500 5 10 7.500' /></Icon>
		</ToolButton>
		<ToolButton $width={8} $faded aria-label='Replay options'><Caret size={4} /></ToolButton>
		<ToolButton aria-label='Save'>
			<Icon size={14}><path d='M1.500 1.500h13v13H3.500l-2-2zM4.500 14.500V10h7v4.500M9 12v2' /></Icon>
		</ToolButton>
		<ToolButton aria-label='New data source'>
			<Icon>
				<ellipse cx='7' cy='4' rx='4.500' ry='2' />
				<path d='M2.500 4v7c0 1 1.500 2 4 2M11.500 4v4' />
				<path d='M11.500 9v6M8.500 12h6' stroke='#222222' strokeWidth='1.600' />
			</Icon>
		</ToolButton>
		<ToolSeparator />
		<ToolButton $width={32} aria-label='New worksheet'>
			<Icon>
				<path d='M9 13.500H1.500v-11h12V9M4.500 11V9M7 11V5.500M9.500 9V7' strokeWidth='1.200' />
				<path d='M12.500 10v5.500M9.800 12.800h5.500' stroke='#222222' strokeWidth='1.600' />
			</Icon>
		</ToolButton>
		<ToolButton $width={12} aria-label='Worksheet options'><Caret size={4} /></ToolButton>
		<ToolButton $width={34} aria-label='Duplicate'>
			<Icon size={14}><path d='M6.500 1.500h8v8h-8zM9 7.500v-2M11 7.500V4M4.500 6h-3v8h8v-3M4 12v-2M6.500 12v-1' /></Icon>
		</ToolButton>
		<ToolButton $width={34} aria-label='Clear sheet'>
			<Icon>
				<path d='M9 13.500H1.500v-11h12V9M4.500 11V9M7 11V5.500M9.500 9V7' strokeWidth='1.200' />
				<path d='M10 10.500l4.800 4.800M14.800 10.500L10 15.300' stroke='#222222' strokeWidth='1.500' />
			</Icon>
		</ToolButton>
		<ToolButton $width={8} aria-label='Clear options'><Caret size={4} /></ToolButton>
		<ToolSeparator />
		<ToolGroup $indent={206}>
			<ToolButton aria-label='Show mark labels'>
				<Icon size={14}>
					<rect x='1' y='1.500' width='14' height='13' strokeDasharray='1.500 1' />
					<path d='M5 6V4.500h6V6M8 4.500v7M6.500 11.500h3' />
				</Icon>
			</ToolButton>
			<ToolButton $width={33} $active aria-label='Fix axes'>
				<Icon>
					<path d='M6.500 1.500l4 1.500-1.500 5 1.500 2-8-3 2-1.200zM5 8.500L2 14' />
					<path d='M9.500 9.800l5 5M14.500 9.800l-5 5' stroke='#111111' strokeWidth='1.600' />
				</Icon>
			</ToolButton>
			<FitBox>
				<PlainSelect aria-label='Fit' />
				<Caret size={4} />
			</FitBox>
		</ToolGroup>
		<ToolSeparator />
		<ToolButton $width={32} aria-label='Show or hide cards'>
			<Icon>
				<path d='M6.500 3.500h9v9h-9zM8.800 11V8M11 11V5.500M13.200 11V7' />
				<path d='M1 3.500h3v2H1zM1 7h3v2H1zM1 10.500h3v2H1z' />
			</Icon>
		</ToolButton>
		<ToolButton $width={8} aria-label='Card options'><Caret size={4} /></ToolButton>
		<ToolButton $width={40} aria-label='Presentation mode'>
			<Icon size={14}><path d='M.5 2.500h15M2 2.500v7h12v-7M8 9.500v4M5 14h6' /></Icon>
		</ToolButton>
		<ToolSeparator $gap={4} />
		<ShowMe>
			<svg width='11' height='12' viewBox='0 0 11 12' aria-hidden='true'>
				<path d='M0 1h9' stroke='#7b6597' strokeWidth='2' />
				<path d='M0 4.300h11' stroke='#6f9dcb' strokeWidth='2' />
				<path d='M0 7.600h5' stroke='#f2a06f' strokeWidth='2' />
				<path d='M0 11h7' stroke='#f2617a' strokeWidth='2' />
			</svg>
			Show Me
		</ShowMe>
	</Toolbar>
);

const DataPanel = () => (
	<DataPane>
		<PaneTabs>
			<PaneTab $active>Data</PaneTab>
			<PaneTab>
				Analytics
				<ChevronIcon left />
			</PaneTab>
		</PaneTabs>
		<DataSource>
			<Icon size={13}>
				<path d='M3 1.500h7M1.500 3v8M3 4c2 1.500 6 1.500 8 0V2.500M5 6.500h7v2M5 6.500v6h3M5 9.500h3' />
				<circle cx='12' cy='12' r='3.500' fill='#3d86ad' stroke='none' />
				<path d='M10.500 12l1.200 1.200 2-2.200' stroke='#ffffff' />
			</Icon>
			ListOfOrders+OrderBreak...
		</DataSource>
		<SearchRow>
			<SearchBox>
				<input type='text' placeholder='Search' aria-label='Search' />
				<Icon size={8} box={8}><circle cx='4.800' cy='3.200' r='2.500' /><path d='M3 5L.5 7.500' /></Icon>
			</SearchBox>
			<Icon size={10} box={10}><path d='M.6 1h8.800L6 5v4L4 8V5z' /></Icon>
			<SmallDivider />
			<ListTools aria-label='View options'>
				<Icon size={10} box={10}><path d='M2 1v8M5 1v8M8 1v8' strokeWidth='2' strokeDasharray='1.500 .7' /></Icon>
				<Caret size={5} />
			</ListTools>
		</SearchRow>
		<TablesTitle>Tables</TablesTitle>
		<TreeArea>
			<Tree>
				{tree.map((node, index) => {
					if (node.divider) return <TreeDivider key={index} />;
					if (node.group) {
						return (
							<TreeGroup key={index} $plain={node.plain}>
								<ChevronIcon />
								{node.plain ? <HierarchyIcon /> : <TableIcon />}
								{node.group}
							</TreeGroup>
						);
					}
					return (
						<TreeItem key={index} $top={node.top}>
							{typeIcons[node.type]}
							{node.name}
						</TreeItem>
					);
				})}
			</Tree>
			<ScrollTrack>
				<ScrollThumb />
			</ScrollTrack>
		</TreeArea>
	</DataPane>
);

const BoxSign = ({ open }) => (
	<Icon size={8} box={8}>
		<path d={`M.5.5h7v7h-7zM2 4h4${open ? 'M4 2v4' : ''}`} />
	</Icon>
);

const allYears = ['(All)', '2011', '2012', '2013', '2014'];

const Cards = () => {
	const [years, setYears] = useState(allYears);

	const toggleYear = year =>
		setYears(years.includes(year) ? years.filter(item => item !== year) : [...years, year]);

	return (
		<CardColumn $width={170} $bottom={6}>
			<Card $height={65}>
				<CardTitle>Pages</CardTitle>
			</Card>
			<Card $height={82}>
				<CardTitle>Filters</CardTitle>
				<FilterShelf>
					<Pill $kind='filter'>
						YEAR(Order Date)
						<PillCaret><Caret size={8} /></PillCaret>
					</Pill>
				</FilterShelf>
			</Card>
			<Card $height={282}>
				<CardTitle>Marks</CardTitle>
				<MarkType>
					<Icon size={9} box={10}><circle cx='5' cy='5' r='4' stroke='#888888' /></Icon>
					<PlainSelect aria-label='Mark type'>
						<option>Automatic</option>
					</PlainSelect>
					<MarkCaret><Caret size={5} /></MarkCaret>
				</MarkType>
				<MarkButtons>
					<MarkButton><ColorDots />Color</MarkButton>
					<MarkButton><SizeIcon />Size</MarkButton>
					<MarkButton><LabelIcon />Label</MarkButton>
					<MarkButton><DetailIcon />Detail</MarkButton>
					<MarkButton><TooltipIcon />Tooltip</MarkButton>
				</MarkButtons>
				<MarkPills>
					<MarkPillRow><ColorDots size={11} /><Pill $kind='measure'>AGG(Profit ..</Pill></MarkPillRow>
					<MarkPillRow><SizeIcon size={12} /><Pill $kind='measure'>SUM(Sales)</Pill></MarkPillRow>
					<MarkPillRow><DetailIcon size={12} /><Pill $kind='dimension'><BoxSign />Country</Pill></MarkPillRow>
					<MarkPillRow><DetailIcon size={12} /><Pill $kind='dimension'><BoxSign open />State</Pill></MarkPillRow>
				</MarkPills>
			</Card>
			<Card $grow $white>
				<CardTitle>YEAR(Order Date)</CardTitle>
				<CheckList>
					{allYears.map(year => (
						<CheckRow key={year}>
							<CheckBox checked={years.includes(year)} onChange={() => toggleYear(year)} />
							{year}
						</CheckRow>
					))}
				</CheckList>
			</Card>
		</CardColumn>
	);
};

const sizes = [
	['34', 1],
	['1,00,000', 8],
	['2,00,000', 11],
	['3,00,000', 13],
	['3,78,984', 15]
];

const Legends = () => (
	<CardColumn $width={169}>
		<Card $height={67} $white>
			<CardTitle>AGG(Profit Margin)</CardTitle>
			<ColorBar />
			<ColorRange>
				<span>-0.500</span>
				<span>0.500</span>
			</ColorRange>
		</Card>
		<Card $white>
			<CardTitle>SUM(Sales)</CardTitle>
			<LegendBody>
				{sizes.map(([label, r]) => (
					<SizeRow key={label}>
						<svg width='30' height='14' viewBox='-15 -7 30 14' aria-hidden='true'>
							<circle r={r} fill='#d6d6d6' stroke='#9a9a9a' />
						</svg>
						{label}
					</SizeRow>
				))}
			</LegendBody>
		</Card>
	</CardColumn>
);

const TaskbarRow = () => (
	<Taskbar>
		<Weather>
			<svg width='28' height='20' viewBox='0 0 28 20' aria-hidden='true'>
				<path d='M7 19a6 6 0 0 1-1-11.800A8 8 0 0 1 21 8a5.600 5.600 0 0 1 1 11z' fill='#c7d7f2' />
				<path d='M7 15a8 8 0 0 1 0-8 8 8 0 0 1 14 1c-6-1-9 4-14 7z' fill='#f0f5fd' />
			</svg>
			<div>
				<div>25°C</div>
				<div>Cloudy</div>
			</div>
		</Weather>
		<TaskIcons>
			<TaskButton aria-label='Start'>
				<svg width='26' height='26' viewBox='0 0 26 26'>
					<defs>
						<linearGradient id='start' x1='0' y1='0' x2='1' y2='1'>
							<stop offset='0' stopColor='#6fd6fb' />
							<stop offset='1' stopColor='#1e9ff2' />
						</linearGradient>
					</defs>
					<path d='M0 0h12.500v12.500H0zM13.500 0H26v12.500H13.500zM0 13.500h12.500V26H0zM13.500 13.500H26V26H13.500z' fill='url(#start)' />
				</svg>
			</TaskButton>
			<TaskButton aria-label='Search'>
				<svg width='26' height='26' viewBox='0 0 26 26' fill='none'>
					<circle cx='11.500' cy='11' r='9' stroke='#f2f2f2' strokeWidth='2.500' fill='#444444' />
					<path d='M18 18l5.500 6' stroke='#f2f2f2' strokeWidth='3' strokeLinecap='round' />
				</svg>
			</TaskButton>
			<TaskButton aria-label='File Explorer'>
				<svg width='28' height='26' viewBox='0 0 28 26'>
					<path d='M1 2q0-1 1-1h8l3 3h13q1 0 1 1v19q0 1-1 1H2q-1 0-1-1z' fill='#e8a317' />
					<path d='M1 6h10l2-2h14v20q0 1-1 1H2q-1 0-1-1z' fill='#fdd04a' />
					<path d='M6 25v-5q0-2 2-2h12q2 0 2 2v5z' fill='#1477d1' />
					<path d='M10 21.500h8' stroke='#0a4c94' strokeWidth='1.500' />
				</svg>
			</TaskButton>
			<TaskButton $running aria-label='Teams'>
				<svg width='30' height='28' viewBox='0 0 30 28'>
					<circle cx='15' cy='6' r='4.500' fill='#7b83eb' />
					<circle cx='23' cy='8' r='3.500' fill='#5059c9' />
					<path d='M10 11h12v8a6.500 6.500 0 0 1-12 3z' fill='#7b83eb' />
					<path d='M21 12h6v6q0 5-5 5z' fill='#5059c9' />
					<rect x='1' y='9' width='13' height='13' rx='1' fill='#4650b8' />
					<text x='7.500' y='19' fontSize='10' fontWeight='700' fill='#ffffff' textAnchor='middle' fontFamily="'Open Sans', sans-serif">T</text>
					<circle cx='25' cy='5' r='5' fill='#6bb700' stroke='#ffffff' />
					<path d='M22.500 5l2 2 3-3.500' stroke='#ffffff' strokeWidth='1.300' fill='none' />
				</svg>
			</TaskButton>
			<TaskButton $running aria-label='Outlook'>
				<svg width='28' height='26' viewBox='0 0 28 26'>
					<path d='M8 1h18v22H8z' fill='#1066b5' />
					<path d='M8 1h9v8H8z' fill='#28a8ea' />
					<path d='M17 1h9v8h-9z' fill='#50d0fb' />
					<path d='M17 9h9v7h-9z' fill='#28a8ea' />
					<path d='M5 13l11 6 12-6v12H5z' fill='#1c8fdd' />
					<rect x='0' y='6' width='14' height='14' rx='1' fill='#0f78d4' />
					<circle cx='7' cy='13' r='3.500' stroke='#ffffff' strokeWidth='1.700' fill='none' />
				</svg>
			</TaskButton>
			<TaskButton $running aria-label='GO'>
				<svg width='26' height='28' viewBox='0 0 26 28'>
					<ellipse cx='13' cy='14' rx='13' ry='13.500' fill='#32127a' />
					<text x='13' y='18.500' fontSize='13' fill='#cdbdf0' textAnchor='middle' fontFamily='Lato, sans-serif'>GO</text>
				</svg>
			</TaskButton>
			<TaskButton $running aria-label='Webex'>
				<svg width='26' height='28' viewBox='0 0 26 28' fill='none' strokeWidth='4.500' strokeLinecap='round'>
					<rect x='.5' y='1' width='25' height='26' rx='5' fill='#0c0c0c' />
					<path d='M17 8.500q5-2 5 2-1 8-4 9.500-3 1-4-5' stroke='#2bd07c' />
					<path d='M15 9q0 11-5 11-4-1-6-10' stroke='#2f78f5' />
					<path d='M9 8.500q4 0 5 6 1 6 5 4' stroke='#25b8ea' />
				</svg>
			</TaskButton>
			<TaskButton $running aria-label='Chrome'>
				<svg width='36' height='32' viewBox='0 0 36 32'>
					<circle cx='18' cy='17' r='12' fill='#ffffff' />
					<path d='M18 17L7.600 11A12 12 0 0 1 28.400 11L18 11z' fill='#e33b2e' />
					<path d='M7.600 11A12 12 0 0 0 18 29l5.200-9L18 17l-5.200 3z' fill='#279c4f' />
					<path d='M28.400 11H18l5.200 9L18 29a12 12 0 0 0 10.400-18z' fill='#fbc116' />
					<circle cx='18' cy='17' r='6' fill='#ffffff' />
					<circle cx='18' cy='17' r='4.700' fill='#2b74e2' />
					<circle cx='28' cy='8' r='8' fill='#f4511e' />
					<text x='28' y='11.500' fontSize='9' fill='#ffffff' textAnchor='middle' fontFamily='Roboto, sans-serif'>K</text>
				</svg>
			</TaskButton>
			<TaskButton $active aria-label='Tableau'>
				<svg width='25' height='25' viewBox='0 0 25 25'>
					<path d='M0 0h25v25H0z' fill='#ffffff' />
					<g transform='translate(1.500 1.500)'><TableauLogo size={22} /></g>
				</svg>
			</TaskButton>
		</TaskIcons>
		<Tray>
			<Icon size={14} box={14} width={1.2}><path d='M1 10l6-6 6 6' /></Icon>
			<TrayText>
				ENG
				<br />
				IN
			</TrayText>
			<Icon size={18} box={18} width={1.3}>
				<path d='M11.500 2.500H2.500q-1 0-1 1v9q0 1 1 1h13.500V9M5 16.500h7M8 13.500v3M13 1.500h4v5h-4zM15 6.500v7' />
			</Icon>
			<Icon size={17} box={17} width={1.2}>
				<path d='M1.500 6.500H4L8 3v11l-4-3.500H1.500zM10.500 6q1.500 2.500 0 5M12.500 4.500q2.700 4 0 8M14.700 3q4 5.500 0 11' />
			</Icon>
			<Icon size={18} box={18} width={1.3}>
				<rect x='1' y='4.500' width='14' height='9' rx='2' />
				<path d='M3 6.500h5v5H3z' fill='#ffffff' stroke='none' />
				<path d='M17 7.500v3' strokeWidth='2' />
			</Icon>
			<TrayText $right>
				11:17
				<br />
				24-08-2022
			</TrayText>
			<Notice>3</Notice>
		</Tray>
	</Taskbar>
);

const TableauPage = () => (
	<App>
		<GlobalStyle />
		<TitleBar>
			<LogoTile><TableauLogo size={13} /></LogoTile>
			Tableau Public - Book2
			<WindowButtons>
				<WindowButton aria-label='Minimize'><Icon size={12} box={12} width={1.2}><path d='M1 6h11' /></Icon></WindowButton>
				<WindowButton aria-label='Restore'>
					<Icon size={12} box={12} width={1.3}><rect x='1' y='3' width='8' height='8' rx='1.500' /><path d='M3.500 1H9q2 0 2 2v5.500' /></Icon>
				</WindowButton>
				<WindowButton aria-label='Close'><Icon size={12} box={12} width={1.3}><path d='M1 1l10 10M11 1L1 11' /></Icon></WindowButton>
			</WindowButtons>
		</TitleBar>
		<MenuBar>
			{['File', 'Data', 'Worksheet', 'Dashboard', 'Story', 'Analysis', 'Map', 'Format'].map(name => (
				<a key={name} href='#menu'>{name}</a>
			))}
		</MenuBar>
		<ToolbarRow />
		<Workspace>
			<DataPanel />
			<Cards />
			<ViewArea>
				<Shelf><ShelfPill /></Shelf>
				<Shelf />
				<ViewRow>
					<Sheet>
						<MapFrame>
							<EuropeMap />
							<MapCredit><a href='#mapbox'>© 2022 Mapbox</a> <a href='#osm'>© OpenStreetMap</a></MapCredit>
						</MapFrame>
					</Sheet>
					<Legends />
				</ViewRow>
			</ViewArea>
			<SideStrip />
		</Workspace>
		<SheetTabs>
			<SheetTab $width={143} $indent={9}>
				<Icon size={7} box={8}><ellipse cx='4' cy='1.800' rx='3' ry='1.300' /><path d='M1 1.800V6c0 2 6 2 6 0V1.800' /></Icon>
				Data Source
			</SheetTab>
			<SheetTab $width={105} $active>Map of Europe</SheetTab>
			<SheetTab $width={163} $indent={6}>Customers Scatter Plot</SheetTab>
			<SheetTab $width={23} aria-label='New worksheet'><SheetPlusIcon kind='sheet' /></SheetTab>
			<SheetTab $width={23} aria-label='New dashboard'><SheetPlusIcon kind='dashboard' /></SheetTab>
			<SheetTab $width={23} aria-label='New story'><SheetPlusIcon kind='story' /></SheetTab>
		</SheetTabs>
		<StatusBar>
			<span>128 marks</span>
			<span>1 row by 1 column</span>
			<span>SUM(Sales): 2,348,482</span>
			<StatusCells>
				<StatusCell $width={138}>
					<UserButton>
						<Icon size={9} box={10}><circle cx='5' cy='2.500' r='2' stroke='#555555' /><path d='M3.500 5h3L8.500 9.500h-7z' stroke='#555555' /></Icon>
						Karthikeya
						<Caret size={6} />
					</UserButton>
				</StatusCell>
				<StatusCell $width={28} />
				<StatusCell $width={29} />
				<StatusCell $width={50} />
				<StatusCell $width={53} $faded>
					<Icon size={6} box={6}><path d='M.5 0v6' /><path d='M5 0v6L2 3z' fill='currentColor' stroke='none' /></Icon>
					<Icon size={6} box={6}><path d='M4.500 0v6L1.500 3z' fill='currentColor' stroke='none' /></Icon>
					<Icon size={6} box={6}><path d='M1.500 0v6l3-3z' fill='currentColor' stroke='none' /></Icon>
					<Icon size={6} box={6}><path d='M1 0v6l3-3z' fill='currentColor' stroke='none' /><path d='M5.500 0v6' /></Icon>
				</StatusCell>
				<StatusCell $width={55} $faded>
					<Icon size={8} box={8}><path d='M1 0v8M4 0v8M7 0v8' strokeWidth='2' strokeDasharray='2 1' /></Icon>
					<Icon size={8} box={8}><path d='M0 2.500h8' strokeWidth='5' /><path d='M0 7h8' strokeWidth='2' strokeDasharray='2 1' /></Icon>
					<Icon size={8} box={8}><path d='M0 0h8v8H0z' fill='#555555' stroke='none' /></Icon>
				</StatusCell>
			</StatusCells>
		</StatusBar>
		<TaskbarRow />
		<Menu $left={387} $top={1} $width={218} $tall>
			<MenuEntries items={menuItems} />
		</Menu>
		<Menu $left={600} $top={98} $width={233}>
			<MenuEntries items={applyItems} short />
		</Menu>
	</App>
);

export default TableauPage;
